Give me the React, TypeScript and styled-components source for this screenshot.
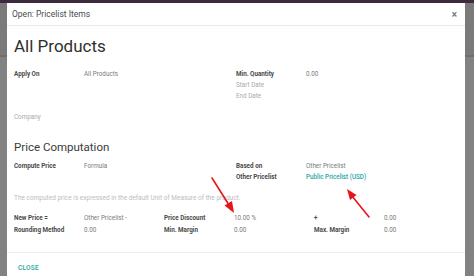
import styled, { createGlobalStyle } from "styled-components";

const Global = createGlobalStyle`
	html, body {
		margin: 0;
		padding: 0;
		background: #7d7d7d;
		font-family: Roboto, "Noto Sans", sans-serif;
		-webkit-font-smoothing: antialiased;
	}
	#root {
		height: 276px;
		overflow: hidden;
	}
`;

const Page = styled.div`
	position: relative;
	height: 276px;
	border-top: 3px solid #3d2a3c;
	box-sizing: border-box;
	background: linear-gradient(#7a7a7a 0 52px, #6e6e6e 52px 54px, #828282 54px);
`;

const Modal = styled.div`
	margin-left: 7px;
	width: 458px;
	height: 273px;
	background: #fff;
	display: flex;
	flex-direction: column;
`;

const Header = styled.div`
	height: 22px;
	flex: none;
	display: flex;
	align-items: center;
	justify-content: space-between;
	padding: 0 8px 0 5px;
	border-bottom: 1px solid #e9e9e9;
	font-size: 8.5px;
	color: #4a4a4a;
`;

const CloseX = styled.span`
	font-size: 10px;
	color: #777;
	font-weight: bold;
`;

const Body = styled.div`
	flex: 1;
	min-height: 0;
	padding: 0 7px;
`;

const Title = styled.h1`
	margin: 10px 0 0;
	font-size: 17px;
	line-height: 20px;
	font-weight: 400;
	color: #2f2f2f;
`;

const Groups = styled.div<{ $top: number }>`
	display: grid;
	grid-template-columns: 222px 1fr;
	margin-top: ${(p) => p.$top}px;
`;

const Group = styled.div`
	display: flex;
	flex-direction: column;
`;

const Row = styled.div`
	display: grid;
	grid-template-columns: 70px 1fr;
	height: 11px;
	align-items: center;
	font-size: 6.3px;
`;

const Label = styled.span<{ $muted?: boolean }>`
	font-weight: ${(p) => (p.$muted ? 400 : 700)};
	color: ${(p) => (p.$muted ? "#a9a9a9" : "#4a4a4a")};
`;

const Value = styled.span<{ $link?: boolean }>`
	color: ${(p) => (p.$link ? "#26a6a3" : "#7a7a7a")};
	font-weight: ${(p) => (p.$link ? 500 : 400)};
`;

const Spaced = styled.div<{ $top: number }>`
	margin-top: ${(p) => p.$top}px;
`;

const Section = styled.h2`
	margin: 16.5px 0 0;
	font-size: 11.5px;
	line-height: 16px;
	font-weight: 400;
	color: #3a3a3a;
`;

const Help = styled.div`
	margin-top: 11px;
	height: 11px;
	line-height: 11px;
	font-size: 6.5px;
	color: #bdbdbd;
`;

const Formula = styled.div`
	margin-top: 8px;
	display: grid;
	grid-template-columns: 70px 80px 70px 80px 70px 1fr;
	grid-auto-rows: 12px;
	align-items: center;
	font-size: 6.3px;
`;

const Footer = styled.div`
	height: 24px;
	flex: none;
	box-sizing: border-box;
	border-top: 1px solid #efefef;
	display: flex;
	align-items: flex-start;
	padding: 11px 11px 0;
`;

const CloseButton = styled.button`
	border: 0;
	background: none;
	padding: 0;
	font-family: inherit;
	font-size: 6.6px;
	line-height: 8px;
	font-weight: 500;
	letter-spacing: 0.2px;
	color: #26a6a3;
`;

const Arrows = styled.svg`
	position: absolute;
	left: 0;
	top: 0;
	pointer-events: none;
`;

export default function App() {
	return (
		<>
			<Global />
			<Page>
				<Modal>
					<Header>
						<span>Open: Pricelist Items</span>
						<CloseX>×</CloseX>
					</Header>
					<Body>
						<Title>All Products</Title>
						<Groups $top={12}>
							<Group>
								<Row>
									<Label>Apply On</Label>
									<Value>All Products</Value>
								</Row>
							</Group>
							<Group>
								<Row>
									<Label>Min. Quantity</Label>
									<Value>0.00</Value>
								</Row>
								<Row>
									<Label $muted>Start Date</Label>
									<Value />
								</Row>
								<Row>
									<Label $muted>End Date</Label>
									<Value />
								</Row>
							</Group>
						</Groups>
						<Spaced $top={10}>
							<Row>
								<Label $muted>Company</Label>
								<Value />
							</Row>
						</Spaced>
						<Section>Price Computation</Section>
						<Groups $top={5.5}>
							<Group>
								<Row>
									<Label>Compute Price</Label>
									<Value>Formula</Value>
								</Row>
							</Group>
							<Group>
								<Row>
									<Label>Based on</Label>
									<Value>Other Pricelist</Value>
								</Row>
								<Row>
									<Label>Other Pricelist</Label>
									<Value $link>Public Pricelist (USD)</Value>
								</Row>
							</Group>
						</Groups>
						<Help>The computed price is expressed in the default Unit of Measure of the product.</Help>
						<Formula>
							<Label>New Price =</Label>
							<Value>Other Pricelist -</Value>
							<Label>Price Discount</Label>
							<Value>10.00 %</Value>
							<Label>+</Label>
							<Value>0.00</Value>
							<Label>Rounding Method</Label>
							<Value>0.00</Value>
							<Label>Min. Margin</Label>
							<Value>0.00</Value>
							<Label>Max. Margin</Label>
							<Value>0.00</Value>
						</Formula>
					</Body>
					<Footer>
						<CloseButton>CLOSE</CloseButton>
					</Footer>
				</Modal>
				<Arrows width="474" height="276" viewBox="0 0 474 276">
					<g stroke="#e8141b" strokeWidth="1.6" fill="#e8141b" strokeLinecap="round">
						<line x1="212" y1="175" x2="229" y2="202" />
						<polygon points="234,210 224.5,202.5 232,198" stroke="none" />
						<line x1="369" y1="214" x2="352" y2="193" />
						<polygon points="347,186 356.5,192 350,197" stroke="none" />
					</g>
				</Arrows>
			</Page>
		</>
	);
}
